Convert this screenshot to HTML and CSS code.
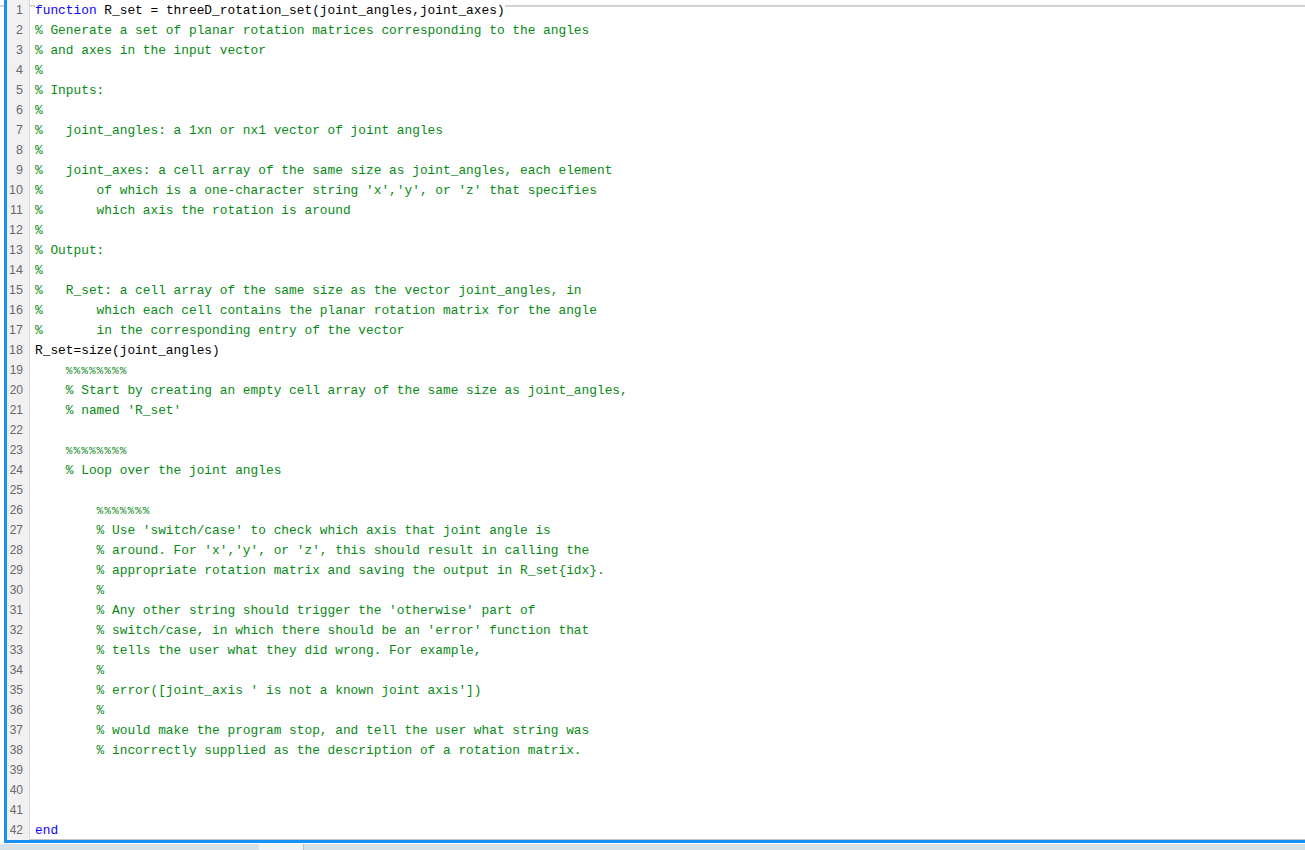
FILE: index.html
```html
<!DOCTYPE html>
<html>
<head>
  <link rel="stylesheet" href="styles.css">
</head>
<body>
  <div class="editor">
    <div class="line first"><span class="num">1</span><span class="code"><span class="cover"><span class="kw">function</span> R_set = threeD_rotation_set(joint_angles,joint_axes)</span></span></div>
    <div class="line"><span class="num">2</span><span class="code cm">% Generate a set of planar rotation matrices corresponding to the angles</span></div>
    <div class="line"><span class="num">3</span><span class="code cm">% and axes in the input vector</span></div>
    <div class="line"><span class="num">4</span><span class="code cm">%</span></div>
    <div class="line"><span class="num">5</span><span class="code cm">% Inputs:</span></div>
    <div class="line"><span class="num">6</span><span class="code cm">%</span></div>
    <div class="line"><span class="num">7</span><span class="code cm">%   joint_angles: a 1xn or nx1 vector of joint angles</span></div>
    <div class="line"><span class="num">8</span><span class="code cm">%</span></div>
    <div class="line"><span class="num">9</span><span class="code cm">%   joint_axes: a cell array of the same size as joint_angles, each element</span></div>
    <div class="line"><span class="num">10</span><span class="code cm">%       of which is a one-character string 'x','y', or 'z' that specifies</span></div>
    <div class="line"><span class="num">11</span><span class="code cm">%       which axis the rotation is around</span></div>
    <div class="line"><span class="num">12</span><span class="code cm">%</span></div>
    <div class="line"><span class="num">13</span><span class="code cm">% Output:</span></div>
    <div class="line"><span class="num">14</span><span class="code cm">%</span></div>
    <div class="line"><span class="num">15</span><span class="code cm">%   R_set: a cell array of the same size as the vector joint_angles, in</span></div>
    <div class="line"><span class="num">16</span><span class="code cm">%       which each cell contains the planar rotation matrix for the angle</span></div>
    <div class="line"><span class="num">17</span><span class="code cm">%       in the corresponding entry of the vector</span></div>
    <div class="line"><span class="num">18</span><span class="code">R_set=size(joint_angles)</span></div>
    <div class="line alt"><span class="num">19</span><span class="code cm">    <span class="cell">%%%%%%%%</span></span></div>
    <div class="line alt"><span class="num">20</span><span class="code cm">    % Start by creating an empty cell array of the same size as joint_angles,</span></div>
    <div class="line alt"><span class="num">21</span><span class="code cm">    % named 'R_set'</span></div>
    <div class="line alt"><span class="num">22</span><span class="code"></span></div>
    <div class="line alt"><span class="num">23</span><span class="code cm">    <span class="cell">%%%%%%%%</span></span></div>
    <div class="line alt"><span class="num">24</span><span class="code cm">    % Loop over the joint angles</span></div>
    <div class="line alt"><span class="num">25</span><span class="code"></span></div>
    <div class="line alt"><span class="num">26</span><span class="code cm">        <span class="cell">%%%%%%%</span></span></div>
    <div class="line alt"><span class="num">27</span><span class="code cm">        % Use 'switch/case' to check which axis that joint angle is</span></div>
    <div class="line alt"><span class="num">28</span><span class="code cm">        % around. For 'x','y', or 'z', this should result in calling the</span></div>
    <div class="line alt"><span class="num">29</span><span class="code cm">        % appropriate rotation matrix and saving the output in R_set{idx}.</span></div>
    <div class="line alt"><span class="num">30</span><span class="code cm">        %</span></div>
    <div class="line alt"><span class="num">31</span><span class="code cm">        % Any other string should trigger the 'otherwise' part of</span></div>
    <div class="line alt"><span class="num">32</span><span class="code cm">        % switch/case, in which there should be an 'error' function that</span></div>
    <div class="line alt"><span class="num">33</span><span class="code cm">        % tells the user what they did wrong. For example,</span></div>
    <div class="line alt"><span class="num">34</span><span class="code cm">        %</span></div>
    <div class="line alt"><span class="num">35</span><span class="code cm">        % error([joint_axis ' is not a known joint axis'])</span></div>
    <div class="line alt"><span class="num">36</span><span class="code cm">        %</span></div>
    <div class="line alt"><span class="num">37</span><span class="code cm">        % would make the program stop, and tell the user what string was</span></div>
    <div class="line alt"><span class="num">38</span><span class="code cm">        % incorrectly supplied as the description of a rotation matrix.</span></div>
    <div class="line alt"><span class="num">39</span><span class="code"></span></div>
    <div class="line alt"><span class="num">40</span><span class="code"></span></div>
    <div class="line alt"><span class="num">41</span><span class="code"></span></div>
    <div class="line alt"><span class="num">42</span><span class="code"><span class="kw">end</span></span></div>
  </div>
  <div class="tab-strip">
    <div class="strip-part strip-left"></div>
    <div class="strip-part strip-thumb"></div>
    <div class="strip-part strip-right"></div>
  </div>
</body>
</html>
```

FILE: styles.css
```css
body {
  margin: 0;
  background: #fff linear-gradient(#fff 0, #fff 5px, #c8c8c8 5px, #dedede 7px, #fff 7px) no-repeat;
  font-family: "Liberation Mono", monospace;
  overflow: hidden;
}
.editor {
  margin-left: 4px;
  border-left: 3px solid #1690f3;
  border-bottom: 3px solid #1690f3;
  box-shadow: 0 -1px 0 #c4c4c4 inset;
}
.line {
  display: flex;
  height: 20px;
  line-height: 21px;
}
.num {
  width: 16px;
  flex: none;
  padding-right: 6px;
  text-align: right;
  background: #f1f1f1;
  border-right: 1px solid #d6d6d6;
  color: #6a6a6a;
  font-family: "Liberation Sans", Arial, sans-serif;
  font-size: 12.5px;
}
.line.alt .num {
  font-family: "Liberation Sans", Arial, sans-serif;
  font-size: 12px;
}
.code {
  padding-left: 5px;
  white-space: pre;
  font-size: 12.83px;
  color: #000;
}
.cover {
  background: #fff;
}
.kw {
  color: #0e00ff;
}
.cm {
  color: #078a14;
}
.cell {
  font-size: 11px;
  letter-spacing: 1.1px;
}
.tab-strip {
  display: flex;
  height: 6px;
  margin-top: 1px;
}
.strip-part {
  height: 100%;
}
.strip-left {
  width: 259px;
  background: #d6e2ea;
}
.strip-thumb {
  width: 44px;
  background: #edf3f7;
  border-right: 1px solid #b9c3cc;
}
.strip-right {
  flex: 1;
  background: #d6e2ea;
}
```
